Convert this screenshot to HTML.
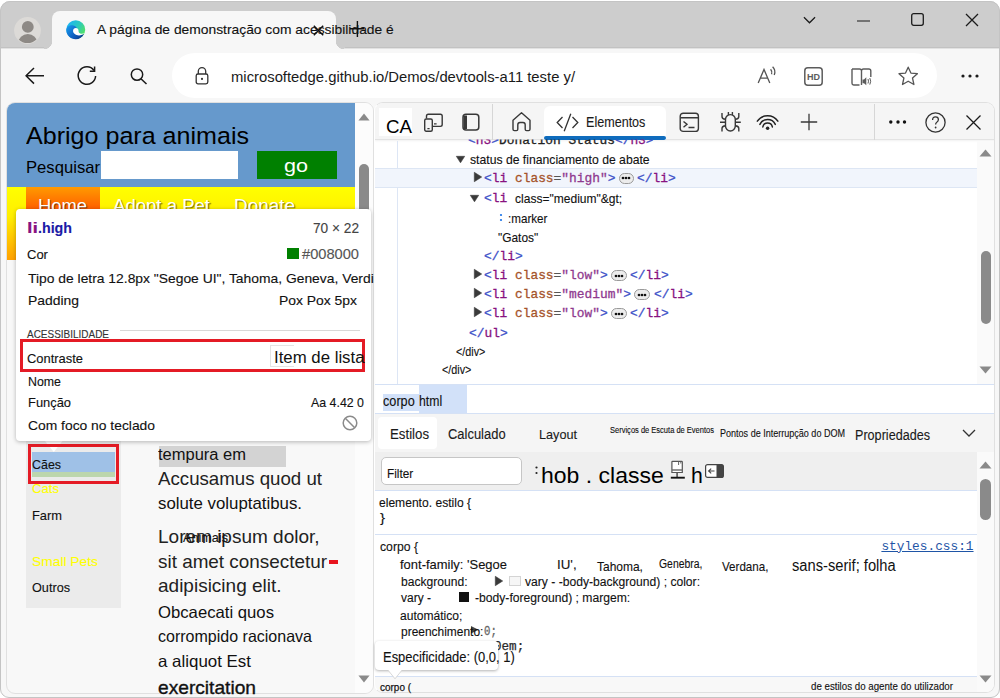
<!DOCTYPE html>
<html><head><meta charset="utf-8">
<style>
*{box-sizing:border-box;margin:0;padding:0}
html,body{width:1000px;height:698px;overflow:hidden;background:#fff;font-family:"Liberation Sans",sans-serif;color:#1b1b1b}
.a{position:absolute}
.t{position:absolute;white-space:nowrap;line-height:normal;transform-origin:0 0}
svg{position:absolute;overflow:visible}
#win{position:absolute;left:0;top:0;width:1000px;height:698px;background:transparent;border-radius:10px 10px 9px 9px;overflow:hidden}
#wb{position:absolute;left:0;top:0.6px;width:999.6px;height:697.4px;border-radius:10px 10px 9px 9px;border:1px solid #c4c4c4;pointer-events:none}
</style></head><body>
<div id="win">
<!-- tab bar -->
<div class="a" style="left:0;top:0;width:1000px;height:698px;background:#f7f7f7;border-radius:10px 10px 9px 9px;clip-path:inset(1px 0 0 0 round 10px 10px 9px 9px)"></div>
<div class="a" style="left:0;top:0;width:1000px;height:48.5px;background:#cdcdcd;clip-path:inset(1px 0 0 0 round 10px 10px 0 0)"></div>
<div class="a" style="left:52px;top:11px;width:284px;height:40px;background:#f7f7f7;border-radius:8px 8px 0 0"></div>
<div class="a" style="left:44px;top:40.5px;width:8px;height:8px;background:radial-gradient(circle at 0 0,#cdcdcd 8px,#f7f7f7 8.5px)"></div>
<div class="a" style="left:336px;top:40.5px;width:8px;height:8px;background:radial-gradient(circle at 100% 0,#cdcdcd 8px,#f7f7f7 8.5px)"></div>
<!-- profile -->
<svg style="left:14px;top:16.5px" width="27" height="27" viewBox="0 0 27 27"><defs><clipPath id="pc"><circle cx="13.5" cy="13.5" r="12.6"/></clipPath></defs><circle cx="13.5" cy="13.5" r="13.4" fill="#dcdad7"/><circle cx="13.8" cy="9.9" r="5.9" fill="#8d8985"/><ellipse cx="13.8" cy="26" rx="9.6" ry="9" fill="#8d8985" clip-path="url(#pc)"/></svg>
<!-- edge logo -->
<svg style="left:65.5px;top:20px" width="19.5" height="19.5" viewBox="0 0 20 20">
 <defs><linearGradient id="eg1" x1="0.1" y1="0.2" x2="0.9" y2="0.7"><stop offset="0" stop-color="#1fb6f0"/><stop offset="0.5" stop-color="#2ac9c0"/><stop offset="1" stop-color="#4fe06a"/></linearGradient>
 <linearGradient id="eg2" x1="0" y1="0.3" x2="0.9" y2="0.9"><stop offset="0" stop-color="#1690e6"/><stop offset="0.55" stop-color="#0f5fc0"/><stop offset="1" stop-color="#0a3a8a"/></linearGradient></defs>
 <circle cx="10" cy="9.9" r="9.7" fill="url(#eg1)"/>
 <path d="M0.3 10.5C0.5 6.8 3.5 5.3 6.6 5.5C9.3 5.7 11 7.3 11.2 9L11.5 14.2C13.5 15.3 16.3 15.3 18.6 14C17 17.6 13.6 19.7 10 19.7C4.6 19.7 0.3 15.5 0.3 10.5Z" fill="url(#eg2)"/>
 <path d="M7.2 11.4C7.2 9.6 8.5 8.3 10.1 8.3C11.7 8.3 13 9.6 12.9 11.2C12.8 12.6 13.6 13.6 15.2 14C16.3 14.2 17.5 14.1 18.8 13.6C16.8 15.6 13.6 16.3 10.8 15.4C8.6 14.7 7.2 13.2 7.2 11.4Z" fill="#fff"/>
</svg>
<!-- tab close and new tab -->
<svg style="left:312.5px;top:25px" width="11" height="11" viewBox="0 0 11 11"><path d="M0.8 0.8L10.2 10.2M10.2 0.8L0.8 10.2" stroke="#111" stroke-width="1.5"/></svg>
<svg style="left:349.5px;top:21.3px" width="14" height="16" viewBox="0 0 14 16"><path d="M7.4 0V16M0 7.7H14" stroke="#111" stroke-width="1.4"/></svg>
<!-- window controls -->
<svg style="left:802.5px;top:16px" width="13" height="8" viewBox="0 0 14 8"><path d="M1 1L7 7L13 1" stroke="#1b1b1b" stroke-width="1.4" fill="none"/></svg>
<svg style="left:857px;top:19.5px" width="13" height="2" viewBox="0 0 14 2"><path d="M0 1H14" stroke="#1b1b1b" stroke-width="1.3"/></svg>
<svg style="left:911px;top:13px" width="13" height="13" viewBox="0 0 13 13"><rect x="0.7" y="0.7" width="11.6" height="11.6" rx="2" stroke="#1b1b1b" stroke-width="1.3" fill="none"/></svg>
<svg style="left:965px;top:13px" width="14" height="14" viewBox="0 0 14 14"><path d="M1 1L13 13M13 1L1 13" stroke="#1b1b1b" stroke-width="1.3"/></svg>

<div class="a" style="left:0;top:47px;width:44px;height:1px;background:#c2c2c2"></div>
<div class="a" style="left:345px;top:47px;width:655px;height:1px;background:#c2c2c2"></div>
<!-- toolbar -->
<svg style="left:25px;top:67px" width="20" height="18" viewBox="0 0 20 18"><path d="M9 1L1 8.8L9 16.6M1 8.8H19" stroke="#1b1b1b" stroke-width="1.5" fill="none" stroke-linejoin="round"/></svg>
<svg style="left:76px;top:65px" width="22" height="22" viewBox="0 0 22 22"><path d="M18 5.5 A8.7 8.7 0 1 0 19.6 11" stroke="#1b1b1b" stroke-width="1.5" fill="none"/><path d="M18.6 1.5V6.2H13.8" stroke="#1b1b1b" stroke-width="1.5" fill="none"/></svg>
<svg style="left:130px;top:67px" width="18" height="18" viewBox="0 0 18 18"><circle cx="7" cy="7.6" r="5.7" stroke="#1b1b1b" stroke-width="1.5" fill="none"/><path d="M11.2 12L16.5 17" stroke="#1b1b1b" stroke-width="1.6"/></svg>
<div class="a" style="left:172px;top:53px;width:765px;height:45px;background:#fff;border-radius:23px"></div>
<svg style="left:195px;top:66px" width="14" height="19" viewBox="0 0 14 19"><path d="M3.3 8V5.3a3.7 3.7 0 0 1 7.4 0V8" stroke="#333" stroke-width="1.3" fill="none"/><rect x="1.2" y="8" width="11.6" height="9.8" rx="1.8" stroke="#333" stroke-width="1.3" fill="none"/><circle cx="7" cy="12.9" r="1.1" fill="#333"/></svg>
<!-- right toolbar icons -->
<svg style="left:757px;top:65px" width="22" height="20" viewBox="0 0 22 20"><path d="M1.2 18L7 4.5L12.8 18M3.3 13.2H10.7" stroke="#555" stroke-width="1.3" fill="none"/><path d="M13.6 4.2q2 2.2 1 5M15.6 1.8q3.6 3.6 1.6 8.2" stroke="#555" stroke-width="1.3" fill="none"/></svg>
<svg style="left:804px;top:66.5px" width="19" height="19" viewBox="0 0 19 19"><rect x="0.8" y="0.8" width="17.4" height="17.4" rx="3" stroke="#5c5c5c" stroke-width="1.5" fill="none"/><text x="9.5" y="13.3" font-family="Liberation Sans" font-weight="bold" font-size="9" text-anchor="middle" fill="#5c5c5c">HD</text></svg>
<svg style="left:851px;top:67.5px" width="22" height="18" viewBox="0 0 22 18"><path d="M1 1H8.5Q10.5 1 10.5 3V17M19.8 9V3Q19.8 1 17.8 1H12.5Q10.5 1 10.5 3M1 1V15.3Q1 17 2.7 17H8.5" stroke="#5c5c5c" stroke-width="1.4" fill="none"/><path d="M11.5 11.5H13L15.3 9.3V17.3L13 15.2H11.5Z" fill="#5c5c5c"/><path d="M17 11q1 2.2 0 4.5M18.8 10q1.8 3.3 0 6.6" stroke="#5c5c5c" stroke-width="1" fill="none"/></svg>
<svg style="left:898px;top:66px" width="21" height="20" viewBox="0 0 21 20"><path d="M10.2 1.2L12.9 7.1L19.4 7.7L14.5 12L15.9 18.5L10.2 15.2L4.5 18.5L5.9 12L1 7.7L7.5 7.1Z" stroke="#555" stroke-width="1.3" fill="none" stroke-linejoin="round"/></svg>
<svg style="left:961px;top:74px" width="18" height="4" viewBox="0 0 18 4"><circle cx="2" cy="2" r="1.6" fill="#1b1b1b"/><circle cx="9" cy="2" r="1.6" fill="#1b1b1b"/><circle cx="16" cy="2" r="1.6" fill="#1b1b1b"/></svg>

<!-- ============ PAGE VIEWPORT ============ -->
<div class="a" style="left:5.5px;top:102px;width:368.5px;height:592px;border-radius:9px;border:1px solid #e0e0e0;background:#f8f8f8;overflow:hidden">
 <div class="a" style="left:0;top:0;width:348.6px;height:83.8px;background:#6699cc"></div>
 <div class="a" style="left:94px;top:48px;width:137px;height:28px;background:#fff"></div>
 <div class="a" style="left:250px;top:48px;width:80px;height:28px;background:#008000"></div>
 <div class="a" style="left:0;top:83.8px;width:348.6px;height:73.7px;background:linear-gradient(#ffff00 0%,#ffee00 40%,#ffa000 100%)"></div>
 <div class="a" style="left:19.4px;top:83.8px;width:74.6px;height:40px;background:linear-gradient(#ff9a00,#ff5a00 60%,#ff4a00)"></div>
 <div class="a" style="left:348.6px;top:0;width:19.4px;height:592px;background:#fcfcfc"></div>
 <div class="a" style="left:352px;top:60.7px;width:10.6px;height:90px;border-radius:5.3px;background:#8a8a8a"></div>
 <div class="a" style="left:19px;top:338px;width:95px;height:166.5px;background:#ebebeb"></div>
 <div class="a" style="left:38.5px;top:338px;width:17.5px;height:11px;background:#fff;clip-path:polygon(0 0,100% 0,50% 100%)"></div>
 <div class="a" style="left:21px;top:341px;width:91.5px;height:39.7px;border:3.2px solid #e41b25"></div>
 <div class="a" style="left:25px;top:349px;width:83px;height:19.5px;background:#9fc1e7"></div>
 <div class="a" style="left:25px;top:368.5px;width:83px;height:5.5px;background:#bcd6ad"></div>
 <div class="a" style="left:152px;top:342.7px;width:127.4px;height:21px;background:#d3d3d3"></div>
 <div class="a" style="left:322px;top:457px;width:9px;height:4px;background:#e8141e"></div>
</div>
<!-- page scroll arrows -->
<svg style="left:358px;top:112.5px" width="12" height="8" viewBox="0 0 14 9" preserveAspectRatio="none"><path d="M0.5 8.5L7 0.5L13.5 8.5Z" fill="#8a8a8a"/></svg>
<svg style="left:358px;top:675px" width="12" height="8" viewBox="0 0 14 9" preserveAspectRatio="none"><path d="M0.5 0.5L7 8.5L13.5 0.5Z" fill="#8a8a8a"/></svg>

<!-- ============ DEVTOOLS ============ -->
<div class="a" style="left:374px;top:102px;width:621px;height:591px;border-radius:9px;border:1px solid #e0e0e0;border-left-color:transparent;background:#fff;overflow:hidden">
 <div class="a" style="left:0;top:0;width:621px;height:37px;background:#f5f5f5;border-bottom:1px solid #e3e3e3;box-shadow:0 1px 2px rgba(0,0,0,0.06)"></div>
 <div class="a" style="left:4px;top:5px;width:33px;height:28px;background:#fff"></div>
 <div class="a" style="left:117px;top:1px;width:1px;height:36px;background:#d6d6d6"></div>
 <div class="a" style="left:169px;top:3px;width:122px;height:34px;background:#fff;border-radius:6px 6px 0 0"></div>
 <div class="a" style="left:169px;top:33px;width:122px;height:3.5px;background:#0f6cbd;border-radius:2px"></div>
 <div class="a" style="left:499px;top:1px;width:1px;height:36px;background:#d6d6d6"></div>
 <div class="a" style="left:21.5px;top:38px;width:1px;height:243px;background:#dde6f5"></div>
 <div class="a" style="left:0;top:65px;width:602px;height:19.5px;background:#f1f5fc;border-top:1px solid #dde6f4;border-bottom:1px solid #dde6f4"></div>
 <div class="a" style="left:602px;top:38px;width:19px;height:243px;background:#fafafa"></div>
 <div class="a" style="left:605.5px;top:148px;width:10.5px;height:73px;border-radius:5.5px;background:#8a8a8a"></div>
 <div class="a" style="left:0;top:281px;width:621px;height:1px;background:#d5e1f5"></div>
 <div class="a" style="left:44px;top:282.3px;width:48px;height:27.8px;background:#d2e1f9"></div>
 <div class="a" style="left:7.9px;top:291.2px;width:36.2px;height:16.8px;background:#d2e1f9"></div>
 <div class="a" style="left:0;top:310px;width:621px;height:1px;background:#d5e1f5"></div>
 <div class="a" style="left:0;top:311px;width:621px;height:38px;background:#f5f5f5"></div>
 <div class="a" style="left:3px;top:313.5px;width:59px;height:32.5px;background:#fff;border-radius:4px"></div>
 <div class="a" style="left:0;top:349px;width:602px;height:38px;background:#efefef"></div>
 <div class="a" style="left:5.5px;top:353.5px;width:141.5px;height:28.5px;background:#fff;border:1px solid #c6c6c6;border-radius:5px"></div>
 <div class="a" style="left:0;top:386.8px;width:602px;height:1px;background:#d5e1f5"></div>
 <div class="a" style="left:0;top:430.6px;width:602px;height:1px;background:#d5e1f5"></div>
 <div class="a" style="left:602px;top:349px;width:19px;height:243px;background:#fafafa"></div>
 <div class="a" style="left:605.4px;top:375.7px;width:10.6px;height:41.2px;border-radius:5.5px;background:#8a8a8a"></div>
 <div class="a" style="left:134px;top:472.6px;width:11.6px;height:10.4px;background:#f6f6f6;border:1px solid #d4d4d4"></div>
 <div class="a" style="left:83.6px;top:489px;width:10.8px;height:10.4px;background:#111"></div>
 <div class="a" style="left:0;top:573.2px;width:602px;height:1px;background:#d5e1f5"></div>
 <div class="a" style="left:0;top:574.2px;width:602px;height:18px;background:#f8f8f8"></div>
 <!-- ellipsis pills -->
 <div class="a" style="left:243.7px;top:69.6px;width:15.6px;height:11px;border:1px solid #9a9a9a;border-radius:6px;background:#ececec"></div>
 <div class="a" style="left:235.6px;top:167.2px;width:16.3px;height:11px;border:1px solid #9a9a9a;border-radius:6px;background:#ececec"></div>
 <div class="a" style="left:259px;top:186.2px;width:15.6px;height:11px;border:1px solid #9a9a9a;border-radius:6px;background:#ececec"></div>
 <div class="a" style="left:235.6px;top:205.2px;width:16.3px;height:11px;border:1px solid #9a9a9a;border-radius:6px;background:#ececec"></div>
</div>
<!-- pill dots -->
<svg style="left:618px;top:172.1px" width="16" height="11" viewBox="0 0 16 11"><circle cx="5" cy="6" r="1.35" fill="#111"/><circle cx="8" cy="6" r="1.35" fill="#111"/><circle cx="11" cy="6" r="1.35" fill="#111"/></svg>
<svg style="left:610.6px;top:270.2px" width="16" height="11" viewBox="0 0 16 11"><circle cx="5" cy="6" r="1.35" fill="#111"/><circle cx="8" cy="6" r="1.35" fill="#111"/><circle cx="11" cy="6" r="1.35" fill="#111"/></svg>
<svg style="left:634px;top:289.2px" width="16" height="11" viewBox="0 0 16 11"><circle cx="5" cy="6" r="1.35" fill="#111"/><circle cx="8" cy="6" r="1.35" fill="#111"/><circle cx="11" cy="6" r="1.35" fill="#111"/></svg>
<svg style="left:610.6px;top:308.2px" width="16" height="11" viewBox="0 0 16 11"><circle cx="5" cy="6" r="1.35" fill="#111"/><circle cx="8" cy="6" r="1.35" fill="#111"/><circle cx="11" cy="6" r="1.35" fill="#111"/></svg>
<!-- tree triangles -->
<svg style="left:455.6px;top:155.5px" width="9" height="7" viewBox="0 0 9 7"><path d="M0.3 0.3H8.7L4.5 6.8Z" fill="#3a3a3a" stroke="#3a3a3a" stroke-width="0.6" stroke-linejoin="round"/></svg>
<svg style="left:474px;top:171.6px" width="8" height="10" viewBox="0 0 8 10"><path d="M0.3 0.3V9.7L7.7 5Z" fill="#3a3a3a" stroke="#3a3a3a" stroke-width="0.6" stroke-linejoin="round"/></svg>
<svg style="left:470px;top:194.5px" width="9" height="7" viewBox="0 0 9 7"><path d="M0.3 0.3H8.7L4.5 6.8Z" fill="#3a3a3a" stroke="#3a3a3a" stroke-width="0.6" stroke-linejoin="round"/></svg>
<svg style="left:474px;top:268.6px" width="8" height="10" viewBox="0 0 8 10"><path d="M0.3 0.3V9.7L7.7 5Z" fill="#3a3a3a" stroke="#3a3a3a" stroke-width="0.6" stroke-linejoin="round"/></svg>
<svg style="left:474px;top:287.7px" width="8" height="10" viewBox="0 0 8 10"><path d="M0.3 0.3V9.7L7.7 5Z" fill="#3a3a3a" stroke="#3a3a3a" stroke-width="0.6" stroke-linejoin="round"/></svg>
<svg style="left:474px;top:306.7px" width="8" height="10" viewBox="0 0 8 10"><path d="M0.3 0.3V9.7L7.7 5Z" fill="#3a3a3a" stroke="#3a3a3a" stroke-width="0.6" stroke-linejoin="round"/></svg>
<svg style="left:498.5px;top:213px" width="4" height="10" viewBox="0 0 4 10"><circle cx="2" cy="2" r="1.1" fill="#1a73e8"/><circle cx="2" cy="7" r="1.1" fill="#1a73e8"/></svg>
<svg style="left:494.6px;top:576.4px" width="8" height="10" viewBox="0 0 8 10"><path d="M0.3 0.3V9.7L7.7 5Z" fill="#3a3a3a" stroke="#3a3a3a" stroke-width="0.6" stroke-linejoin="round"/></svg>
<svg style="left:471px;top:625.5px" width="7.5" height="7.5" viewBox="0 0 8 8"><path d="M0 0V8L8 4Z" fill="#474747"/></svg>
<!-- devtools toolbar icons -->
<svg style="left:424px;top:113px" width="20" height="19" viewBox="0 0 20 19"><path d="M2.5 5.5V3Q2.5 1.2 4.3 1.2H16.4Q18.2 1.2 18.2 3V11.6Q18.2 13.4 16.4 13.4H9" stroke="#383838" stroke-width="1.4" fill="none"/><rect x="0.7" y="6" width="7.6" height="12.3" rx="1.5" stroke="#383838" stroke-width="1.4" fill="none"/><path d="M3.4 15.6H5.6M10 10.8H12.6" stroke="#383838" stroke-width="1.3"/></svg>
<svg style="left:462px;top:113px" width="18" height="18" viewBox="0 0 18 18"><rect x="1" y="1.2" width="15.8" height="15.8" rx="3" stroke="#383838" stroke-width="1.5" fill="none"/><path d="M1.5 2.5H5V16H1.5Z" fill="#383838"/></svg>
<svg style="left:511px;top:111px" width="21" height="21" viewBox="0 0 21 21"><path d="M2 9.2L10.5 1.8L19 9.2V18.2Q19 19.6 17.6 19.6H15.6Q14.2 19.6 14.2 18.2V13.8Q14.2 11.5 12 11.5H9Q6.8 11.5 6.8 13.8V18.2Q6.8 19.6 5.4 19.6H3.4Q2 19.6 2 18.2Z" stroke="#383838" stroke-width="1.4" fill="none" stroke-linejoin="round"/></svg>
<svg style="left:556px;top:113px" width="23" height="19" viewBox="0 0 23 19"><path d="M6.5 4L1.2 9.5L6.5 15M16.5 4L21.8 9.5L16.5 15M14.8 0.8L8.2 18.2" stroke="#333" stroke-width="1.3" fill="none"/></svg>
<svg style="left:679px;top:112px" width="21" height="21" viewBox="0 0 21 21"><rect x="1.2" y="1.2" width="18.2" height="18.2" rx="3" stroke="#383838" stroke-width="1.4" fill="none"/><path d="M1.5 5.8H19.2M4.5 9.5L8 12.3L4.5 15.2M9.5 15.5H15.5" stroke="#383838" stroke-width="1.4" fill="none"/></svg>
<svg style="left:719px;top:111px" width="23" height="21" viewBox="0 0 23 21"><rect x="6.5" y="3.6" width="9.8" height="16.4" rx="4.9" stroke="#383838" stroke-width="1.4" fill="none"/><path d="M9.4 1V4.2M13.4 1V4.2M6.5 8.3Q3 8 3 5.5V2M16.3 8.3Q19.8 8 19.8 5.5V2M1 11.3H6.5M16.3 11.3H21.8M6.5 14.8Q3 15.1 3 17.6V20.5M16.3 14.8Q19.8 15.1 19.8 17.6V20.5" stroke="#383838" stroke-width="1.4" fill="none"/></svg>
<svg style="left:755px;top:112px" width="26" height="19" viewBox="0 0 26 19"><path d="M2.35 9.2A12.3 12.3 0 0 1 22.85 9.2M4.9 12.4A8.5 8.5 0 0 1 20.3 12.4M7.83 14.9A4.9 4.9 0 0 1 17.37 14.9" stroke="#222" stroke-width="1.5" fill="none" stroke-linecap="round"/><circle cx="12.6" cy="16.3" r="1.75" fill="#222"/></svg>
<svg style="left:800px;top:113px" width="18" height="18" viewBox="0 0 18 18"><path d="M9 0.8V17.2M0.8 9H17.2" stroke="#383838" stroke-width="1.3"/></svg>
<svg style="left:888px;top:120px" width="19" height="4" viewBox="0 0 19 4"><circle cx="2.8" cy="2" r="1.7" fill="#111"/><circle cx="10" cy="2" r="1.7" fill="#111"/><circle cx="16.5" cy="2" r="1.7" fill="#111"/></svg>
<svg style="left:925px;top:111.5px" width="21" height="21" viewBox="0 0 21 21"><circle cx="10.5" cy="10.5" r="9.6" stroke="#333" stroke-width="1.3" fill="none"/><path d="M7.6 8Q7.6 4.8 10.5 4.8Q13.4 4.8 13.4 7.6Q13.4 9.3 11.8 10.2Q10.6 10.9 10.6 12.6" stroke="#333" stroke-width="1.3" fill="none"/><circle cx="10.6" cy="15.5" r="0.9" fill="#333"/></svg>
<svg style="left:966px;top:115px" width="15" height="15" viewBox="0 0 15 15"><path d="M0.5 0.5L14.5 14.5M14.5 0.5L0.5 14.5" stroke="#1b1b1b" stroke-width="1.3"/></svg>
<!-- styles pane icons -->
<svg style="left:962px;top:429px" width="14" height="8" viewBox="0 0 14 8"><path d="M1 1L7 7L13 1" stroke="#333" stroke-width="1.3" fill="none"/></svg>
<svg style="left:534.5px;top:466px" width="3" height="9" viewBox="0 0 3 9"><circle cx="1.5" cy="1.5" r="1.1" fill="#222"/><circle cx="1.5" cy="7" r="1.1" fill="#222"/></svg>
<svg style="left:670px;top:460px" width="16" height="20" viewBox="0 0 16 20"><path d="M1.9 2Q1.9 1.3 2.6 1.3H11.6Q12.3 1.3 12.3 2V12.5H1.9Z" stroke="#555" stroke-width="1.2" fill="#fff"/><path d="M2 10H12.2" stroke="#666" stroke-width="1.4"/><path d="M8.6 1.8V5M10.8 1.8V3.5" stroke="#666" stroke-width="1"/><path d="M7.1 12.5V17.5" stroke="#555" stroke-width="1.6"/><path d="M0.8 17.7H14.8" stroke="#111" stroke-width="1.9"/></svg>
<svg style="left:705px;top:464px" width="19" height="14" viewBox="0 0 19 14"><rect x="0.6" y="0.6" width="17.8" height="12.8" rx="2" stroke="#444" stroke-width="1.2" fill="#fff"/><path d="M11.5 1V13.4H16.5Q18.4 13.4 18.4 11.4V2.6Q18.4 0.6 16.5 0.6H11.5Z" fill="#444"/><path d="M9.5 7H3.6M6.2 4.6L3.6 7L6.2 9.4" stroke="#444" stroke-width="1.1" fill="none"/></svg>
<!-- devtools scroll arrows -->
<svg style="left:979px;top:149px" width="13" height="8" viewBox="0 0 13 8"><path d="M0.5 7.5L6.5 0.5L12.5 7.5Z" fill="#8a8a8a"/></svg>
<svg style="left:979px;top:366px" width="13" height="8" viewBox="0 0 13 8"><path d="M0.5 0.5L6.5 7.5L12.5 0.5Z" fill="#8a8a8a"/></svg>
<svg style="left:979px;top:461px" width="13" height="8" viewBox="0 0 13 8"><path d="M0.5 7.5L6.5 0.5L12.5 7.5Z" fill="#8a8a8a"/></svg>
<svg style="left:979px;top:675px" width="13" height="8" viewBox="0 0 13 8"><path d="M0.5 0.5L6.5 7.5L12.5 0.5Z" fill="#8a8a8a"/></svg>

<div class="t" style="left:97px;top:21.89px;font-size:13.6px;color:#111;transform:scaleX(1.0173);-webkit-text-stroke:0.12px currentColor;">A página de demonstração com acessibilidade é</div>
<div class="t" style="left:231px;top:68.27px;font-size:15.5px;color:#1a1a1a;transform:scaleX(0.9560);">microsoftedge.github.io/Demos/devtools-a11 teste y/</div>
<div class="t" style="left:26px;top:122.33px;font-size:24.5px;color:#000;transform:scaleX(1.0234);">Abrigo para animais</div>
<div class="t" style="left:26px;top:157.57px;font-size:16.5px;color:#000;transform:scaleX(1.0086);">Pesquisar</div>
<div class="t" style="left:284px;top:154.81px;font-size:19px;color:#fff;transform:scaleX(1.1356);">go</div>
<div class="t" style="left:38px;top:195.71px;font-size:18px;color:#fff;transform:scaleX(1.0205);text-shadow:1px 1px 1px rgba(0,0,0,0.55);">Home</div>
<div class="t" style="left:113px;top:195.71px;font-size:18px;color:#fff;transform:scaleX(1.0312);text-shadow:1px 1px 1px rgba(0,0,0,0.55);">Adopt a Pet</div>
<div class="t" style="left:234px;top:195.71px;font-size:18px;color:#fff;transform:scaleX(1.0509);text-shadow:1px 1px 1px rgba(0,0,0,0.55);">Donate</div>
<div class="t" style="left:32px;top:457.24px;font-size:13px;color:#111;transform:scaleX(0.9556);-webkit-text-stroke:0.12px currentColor;">Cães</div>
<div class="t" style="left:32px;top:480.78px;font-size:13.5px;color:#ffff00;transform:scaleX(0.9727);-webkit-text-stroke:0.12px currentColor;">Cats</div>
<div class="t" style="left:32px;top:508.24px;font-size:13px;color:#111;transform:scaleX(0.9891);-webkit-text-stroke:0.12px currentColor;">Farm</div>
<div class="t" style="left:32px;top:553.78px;font-size:13.5px;color:#ffff00;transform:scaleX(1.0229);-webkit-text-stroke:0.12px currentColor;">Small Pets</div>
<div class="t" style="left:32px;top:580.24px;font-size:13px;color:#111;transform:scaleX(0.9740);-webkit-text-stroke:0.12px currentColor;">Outros</div>
<div class="t" style="left:158px;top:445.52px;font-size:16px;color:#111;transform:scaleX(1.0308);">tempura em</div>
<div class="t" style="left:158px;top:468.26px;font-size:18.5px;color:#222;transform:scaleX(1.0094);">Accusamus quod ut</div>
<div class="t" style="left:158px;top:493.81px;font-size:17px;color:#111;transform:scaleX(0.9894);">solute voluptatibus.</div>
<div class="t" style="left:158px;top:526.30px;font-size:19px;color:#222;">Lorem ipsum dolor,</div>
<div class="t" style="left:183px;top:529.74px;font-size:13px;color:#111;transform:scaleX(0.9733);-webkit-text-stroke:0.12px currentColor;">Animais</div>
<div class="t" style="left:158px;top:550.80px;font-size:19px;color:#222;transform:scaleX(0.9940);">sit amet consectetur</div>
<div class="t" style="left:158px;top:575.10px;font-size:19px;color:#222;">adipisicing elit.</div>
<div class="t" style="left:158px;top:603.07px;font-size:16.5px;color:#111;transform:scaleX(1.0117);">Obcaecati quos</div>
<div class="t" style="left:158px;top:627.07px;font-size:16.5px;color:#111;transform:scaleX(0.9706);">corrompido racionava</div>
<div class="t" style="left:158px;top:652.07px;font-size:16.5px;color:#111;transform:scaleX(1.0242);">a aliquot Est</div>
<div class="t" style="left:158px;top:677.26px;font-size:18.5px;color:#111;transform:scaleX(1.0359);-webkit-text-stroke:0.35px #111;">exercitation</div>
<div class="t" style="left:385.6px;top:115.66px;font-size:18.5px;color:#000;transform:scaleX(1.0117);">CA</div>
<div class="t" style="left:585.6px;top:114.33px;font-size:14px;color:#1b1b1b;transform:scaleX(0.8980);-webkit-text-stroke:0.12px currentColor;">Elementos</div>
<div class="t" style="left:468px;top:133.14px;font-size:13.4px;font-family:'Liberation Mono',monospace;color:#222;transform:scaleX(0.9620);clip-path:inset(6.46px 0 0 0);-webkit-text-stroke:0.3px currentColor;"><span style="color:#3d50c8">&lt;</span><span style="color:#881280">h3</span><span style="color:#3d50c8">&gt;</span>Donation Status<span style="color:#3d50c8">&lt;/</span><span style="color:#881280">h3</span><span style="color:#3d50c8">&gt;</span></div>
<div class="t" style="left:470px;top:151.83px;font-size:13px;color:#111;transform:scaleX(0.9378);-webkit-text-stroke:0.12px currentColor;">status de financiamento de abate</div>
<div class="t" style="left:484px;top:170.64px;font-size:13.4px;font-family:'Liberation Mono',monospace;transform:scaleX(0.9620);-webkit-text-stroke:0.3px currentColor;"><span style="color:#3d50c8">&lt;</span><span style="color:#881280">li</span> <span style="color:#a5532a">class</span><span style="color:#555">=</span><span style="color:#8f3a8f">"high"</span><span style="color:#3d50c8">&gt;</span></div>
<div class="t" style="left:637px;top:170.64px;font-size:13.4px;font-family:'Liberation Mono',monospace;transform:scaleX(0.9620);-webkit-text-stroke:0.3px currentColor;"><span style="color:#3d50c8">&lt;/</span><span style="color:#881280">li</span><span style="color:#3d50c8">&gt;</span></div>
<div class="t" style="left:484px;top:191.24px;font-size:13.4px;font-family:'Liberation Mono',monospace;transform:scaleX(0.9620);-webkit-text-stroke:0.3px currentColor;"><span style="color:#3d50c8">&lt;</span><span style="color:#881280">li</span></div>
<div class="t" style="left:515.4px;top:190.63px;font-size:13px;color:#111;transform:scaleX(0.9257);-webkit-text-stroke:0.12px currentColor;">class="medium"&amp;gt;</div>
<div class="t" style="left:507.6px;top:210.94px;font-size:13px;color:#111;transform:scaleX(0.8943);-webkit-text-stroke:0.12px currentColor;">:marker</div>
<div class="t" style="left:497.8px;top:229.83px;font-size:13px;color:#111;transform:scaleX(0.9154);-webkit-text-stroke:0.12px currentColor;">"Gatos"</div>
<div class="t" style="left:484px;top:249.24px;font-size:13.4px;font-family:'Liberation Mono',monospace;transform:scaleX(0.9620);-webkit-text-stroke:0.3px currentColor;"><span style="color:#3d50c8">&lt;/</span><span style="color:#881280">li</span><span style="color:#3d50c8">&gt;</span></div>
<div class="t" style="left:484px;top:268.14px;font-size:13.4px;font-family:'Liberation Mono',monospace;transform:scaleX(0.9620);-webkit-text-stroke:0.3px currentColor;"><span style="color:#3d50c8">&lt;</span><span style="color:#881280">li</span> <span style="color:#a5532a">class</span><span style="color:#555">=</span><span style="color:#8f3a8f">"low"</span><span style="color:#3d50c8">&gt;</span></div>
<div class="t" style="left:630px;top:268.14px;font-size:13.4px;font-family:'Liberation Mono',monospace;transform:scaleX(0.9620);-webkit-text-stroke:0.3px currentColor;"><span style="color:#3d50c8">&lt;/</span><span style="color:#881280">li</span><span style="color:#3d50c8">&gt;</span></div>
<div class="t" style="left:484px;top:287.24px;font-size:13.4px;font-family:'Liberation Mono',monospace;transform:scaleX(0.9620);-webkit-text-stroke:0.3px currentColor;"><span style="color:#3d50c8">&lt;</span><span style="color:#881280">li</span> <span style="color:#a5532a">class</span><span style="color:#555">=</span><span style="color:#8f3a8f">"medium"</span><span style="color:#3d50c8">&gt;</span></div>
<div class="t" style="left:653.8px;top:287.24px;font-size:13.4px;font-family:'Liberation Mono',monospace;transform:scaleX(0.9620);-webkit-text-stroke:0.3px currentColor;"><span style="color:#3d50c8">&lt;/</span><span style="color:#881280">li</span><span style="color:#3d50c8">&gt;</span></div>
<div class="t" style="left:484px;top:306.14px;font-size:13.4px;font-family:'Liberation Mono',monospace;transform:scaleX(0.9620);-webkit-text-stroke:0.3px currentColor;"><span style="color:#3d50c8">&lt;</span><span style="color:#881280">li</span> <span style="color:#a5532a">class</span><span style="color:#555">=</span><span style="color:#8f3a8f">"low"</span><span style="color:#3d50c8">&gt;</span></div>
<div class="t" style="left:630px;top:306.14px;font-size:13.4px;font-family:'Liberation Mono',monospace;transform:scaleX(0.9620);-webkit-text-stroke:0.3px currentColor;"><span style="color:#3d50c8">&lt;/</span><span style="color:#881280">li</span><span style="color:#3d50c8">&gt;</span></div>
<div class="t" style="left:469px;top:325.64px;font-size:13.4px;font-family:'Liberation Mono',monospace;transform:scaleX(0.9620);-webkit-text-stroke:0.3px currentColor;"><span style="color:#3d50c8">&lt;/</span><span style="color:#881280">ul</span><span style="color:#3d50c8">&gt;</span></div>
<div class="t" style="left:455.6px;top:344.64px;font-size:12px;color:#111;transform:scaleX(0.8994);-webkit-text-stroke:0.12px currentColor;">&lt;/div&gt;</div>
<div class="t" style="left:441.6px;top:363.44px;font-size:12px;color:#111;transform:scaleX(0.8994);-webkit-text-stroke:0.12px currentColor;">&lt;/div&gt;</div>
<div class="t" style="left:383.2px;top:393.03px;font-size:14px;color:#111;transform:scaleX(0.9052);-webkit-text-stroke:0.12px currentColor;">corpo</div>
<div class="t" style="left:419.1px;top:393.03px;font-size:14px;color:#111;transform:scaleX(0.8734);-webkit-text-stroke:0.12px currentColor;">html</div>
<div class="t" style="left:390px;top:426.33px;font-size:14px;color:#1b1b1b;transform:scaleX(0.9458);-webkit-text-stroke:0.12px currentColor;">Estilos</div>
<div class="t" style="left:448px;top:426.33px;font-size:14px;color:#1b1b1b;transform:scaleX(0.9251);-webkit-text-stroke:0.12px currentColor;">Calculado</div>
<div class="t" style="left:539px;top:426.78px;font-size:13.5px;color:#1b1b1b;transform:scaleX(0.9375);-webkit-text-stroke:0.12px currentColor;">Layout</div>
<div class="t" style="left:610px;top:425.31px;font-size:8.5px;color:#111;transform:scaleX(0.8840);-webkit-text-stroke:0.12px currentColor;">Serviços de Escuta de Eventos</div>
<div class="t" style="left:720px;top:426.85px;font-size:11px;color:#111;transform:scaleX(0.8210);-webkit-text-stroke:0.12px currentColor;">Pontos de Interrupção do DOM</div>
<div class="t" style="left:855px;top:427.33px;font-size:14px;color:#1b1b1b;transform:scaleX(0.9006);-webkit-text-stroke:0.12px currentColor;">Propriedades</div>
<div class="t" style="left:386.5px;top:466.69px;font-size:12.5px;color:#111;transform:scaleX(0.9468);-webkit-text-stroke:0.12px currentColor;">Filter</div>
<div class="t" style="left:541.3px;top:463.24px;font-size:22.5px;color:#000;transform:scaleX(1.0219);">hob . classe</div>
<div class="t" style="left:691px;top:463.24px;font-size:22.5px;color:#000;transform:scaleX(0.9430);">h</div>
<div class="t" style="left:379px;top:496.29px;font-size:12.5px;color:#111;transform:scaleX(0.9664);-webkit-text-stroke:0.12px currentColor;">elemento. estilo {</div>
<div class="t" style="left:380px;top:510.24px;font-size:13px;color:#111;transform:scaleX(1.1516);-webkit-text-stroke:0.12px currentColor;">}</div>
<div class="t" style="left:380px;top:539.69px;font-size:12.5px;color:#111;transform:scaleX(0.9765);-webkit-text-stroke:0.12px currentColor;">corpo {</div>
<div class="t" style="left:881.4px;top:538.74px;font-size:12.8px;font-family:'Liberation Mono',monospace;color:#1f55a6;text-decoration:underline;">styles.css:1</div>
<div class="t" style="left:400px;top:557.38px;font-size:13.5px;color:#111;transform:scaleX(0.9607);-webkit-text-stroke:0.12px currentColor;">font-family: 'Segoe</div>
<div class="t" style="left:557.4px;top:557.38px;font-size:13.5px;color:#111;transform:scaleX(0.9885);-webkit-text-stroke:0.12px currentColor;">IU',</div>
<div class="t" style="left:596.7px;top:558.74px;font-size:13px;color:#111;transform:scaleX(0.9206);-webkit-text-stroke:0.12px currentColor;">Tahoma,</div>
<div class="t" style="left:658.6px;top:556.69px;font-size:12.5px;color:#111;transform:scaleX(0.8327);-webkit-text-stroke:0.12px currentColor;">Genebra,</div>
<div class="t" style="left:721.6px;top:558.74px;font-size:13px;color:#111;transform:scaleX(0.8915);-webkit-text-stroke:0.12px currentColor;">Verdana,</div>
<div class="t" style="left:792.3px;top:557.02px;font-size:16px;color:#111;transform:scaleX(0.9182);">sans-serif; folha</div>
<div class="t" style="left:401.4px;top:575.09px;font-size:12.5px;color:#111;transform:scaleX(0.9680);-webkit-text-stroke:0.12px currentColor;">background:</div>
<div class="t" style="left:525px;top:574.69px;font-size:12.5px;color:#111;transform:scaleX(0.9688);-webkit-text-stroke:0.12px currentColor;">vary - -body-background) ; color:</div>
<div class="t" style="left:401px;top:591.09px;font-size:12.5px;color:#111;transform:scaleX(0.9600);-webkit-text-stroke:0.12px currentColor;">vary -</div>
<div class="t" style="left:474.5px;top:591.09px;font-size:12.5px;color:#111;transform:scaleX(0.9713);-webkit-text-stroke:0.12px currentColor;">-body-foreground) ; margem:</div>
<div class="t" style="left:400.3px;top:608.99px;font-size:12.5px;color:#111;transform:scaleX(0.9657);-webkit-text-stroke:0.12px currentColor;">automático;</div>
<div class="t" style="left:401.4px;top:625.49px;font-size:12.5px;color:#111;transform:scaleX(0.9563);-webkit-text-stroke:0.12px currentColor;">preenchimento:</div>
<div class="t" style="left:483.8px;top:624.34px;font-size:13.4px;font-family:'Liberation Mono',monospace;color:#666;transform:scaleX(0.7964);-webkit-text-stroke:0.3px currentColor;">0;</div>
<div class="t" style="left:493.6px;top:639.14px;font-size:13.4px;font-family:'Liberation Mono',monospace;color:#2a2a2a;transform:scaleX(0.9396);-webkit-text-stroke:0.25px currentColor;">0em;</div>
<div class="t" style="left:379.5px;top:681.39px;font-size:11.5px;color:#111;transform:scaleX(0.8661);-webkit-text-stroke:0.25px #111;">corpo (</div>
<div class="t" style="left:811px;top:679.59px;font-size:11.5px;color:#111;transform:scaleX(0.8445);-webkit-text-stroke:0.12px currentColor;">de estilos do agente do utilizador</div>
<!-- tooltip -->
<div class="a" style="left:16px;top:209px;width:355px;height:232px;background:#fff;border-radius:4px;box-shadow:0 1px 4px rgba(0,0,0,0.28)"></div>
<div class="a" style="left:287px;top:248px;width:12px;height:11px;background:#008000"></div>
<div class="a" style="left:120px;top:330px;width:240px;height:1px;background:#d8d8d8"></div>
<div class="a" style="left:20px;top:339px;width:345px;height:33px;border:3px solid #e41b25"></div>
<div class="a" style="left:270px;top:345px;width:24px;height:22px;border:1px solid #e4e4e4;border-right:none"></div>
<svg style="left:342px;top:415px" width="16" height="16" viewBox="0 0 16 16"><circle cx="8" cy="8" r="6.8" stroke="#8a8a8a" stroke-width="1.5" fill="none"/><path d="M3.3 3.3L12.7 12.7" stroke="#8a8a8a" stroke-width="1.5"/></svg>

<!-- specificity tooltip -->
<div class="a" style="left:375px;top:641px;width:123px;height:29px;background:#fff;border-radius:4px;box-shadow:0 1px 3px rgba(0,0,0,0.3)"></div>
<svg style="left:387px;top:668px" width="16" height="12" viewBox="0 0 16 12"><path d="M0.5 1.5L8 10.8L15.5 1.5" fill="#fff" stroke="#cfcfcf" stroke-width="0.8"/><rect x="0" y="0" width="16" height="2" fill="#fff"/></svg>

<div class="t" style="left:27px;top:220.33px;font-size:14px;font-weight:bold;color:#881280;transform:scaleX(1.4140);-webkit-text-stroke:0.12px currentColor;">li</div>
<div class="t" style="left:38px;top:220.33px;font-size:14px;font-weight:bold;color:#1a1aa6;transform:scaleX(1.0169);-webkit-text-stroke:0.12px currentColor;">.high</div>
<div class="t" style="left:313px;top:220.33px;font-size:14px;color:#444;transform:scaleX(0.9767);-webkit-text-stroke:0.12px currentColor;">70 × 22</div>
<div class="t" style="left:27px;top:247.24px;font-size:13px;color:#111;-webkit-text-stroke:0.12px currentColor;">Cor</div>
<div class="t" style="left:302px;top:246.33px;font-size:14px;color:#555;transform:scaleX(1.0458);-webkit-text-stroke:0.12px currentColor;">#008000</div>
<div class="t" style="left:28px;top:271.24px;font-size:13px;color:#111;transform:scaleX(1.0661);-webkit-text-stroke:0.12px currentColor;">Tipo de letra 12.8px "Segoe UI", Tahoma, Geneva, Verdi</div>
<div class="t" style="left:28px;top:293.24px;font-size:13px;color:#111;transform:scaleX(1.0690);-webkit-text-stroke:0.12px currentColor;">Padding</div>
<div class="t" style="left:279px;top:293.24px;font-size:13px;color:#111;transform:scaleX(1.0687);-webkit-text-stroke:0.12px currentColor;">Pox Pox 5px</div>
<div class="t" style="left:27px;top:327.50px;font-size:10.5px;color:#333;transform:scaleX(0.9495);-webkit-text-stroke:0.12px currentColor;">ACESSIBILIDADE</div>
<div class="t" style="left:27px;top:350.74px;font-size:13px;color:#111;transform:scaleX(0.9936);-webkit-text-stroke:0.12px currentColor;">Contraste</div>
<div class="t" style="left:274px;top:348.72px;font-size:16px;color:#111;transform:scaleX(1.0492);">Item de lista</div>
<div class="t" style="left:28px;top:375.14px;font-size:12px;color:#111;transform:scaleX(1.0309);-webkit-text-stroke:0.12px currentColor;">Nome</div>
<div class="t" style="left:28px;top:395.24px;font-size:13px;color:#111;transform:scaleX(0.9917);-webkit-text-stroke:0.12px currentColor;">Função</div>
<div class="t" style="left:311px;top:395.24px;font-size:13px;color:#111;transform:scaleX(0.9523);-webkit-text-stroke:0.12px currentColor;">Aa 4.42 0</div>
<div class="t" style="left:28px;top:418.24px;font-size:13px;color:#111;transform:scaleX(1.0651);-webkit-text-stroke:0.12px currentColor;">Com foco no teclado</div>
<div class="t" style="left:383.3px;top:649.13px;font-size:14px;color:#111;transform:scaleX(0.9248);-webkit-text-stroke:0.12px currentColor;">Especificidade: (0,0, 1)</div>
</div>
<div id="wb"></div>
</body></html>
